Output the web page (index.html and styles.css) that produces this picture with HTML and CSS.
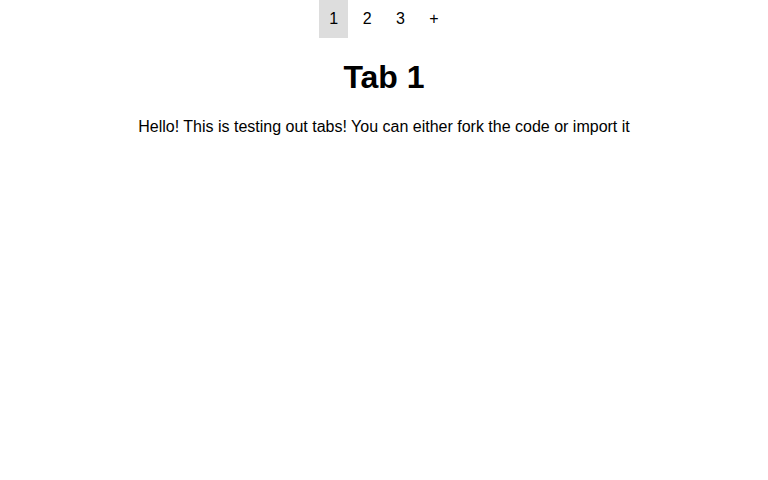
FILE: index.html
```html
<!DOCTYPE html>
<html>
<head>
<meta charset="utf-8">
<link rel="stylesheet" href="styles.css">
</head>
<body>
<div class="tabs">
  <span class="tab active">1</span>
  <span class="tab">2</span>
  <span class="tab">3</span>
  <span class="tab">+</span>
</div>
<div class="panel">
  <h1 class="title">Tab 1</h1>
  <p class="text">Hello! This is testing out tabs! You can either fork the code or import it</p>
</div>
</body>
</html>
```
FILE: styles.css
```css
body {
  margin: 0;
  font-family: "Liberation Sans", Arial, sans-serif;
  font-size: 16px;
  color: #000;
  background: #fff;
  text-align: center;
}
.tabs {
  line-height: 18px;
}
.tab {
  display: inline-block;
  padding: 10px;
  cursor: pointer;
}
.tab.active {
  background: #dddddd;
}
.title {
  font-size: 32px;
  margin: 21px 0 22px;
}
.text {
  margin: 0;
}
```
